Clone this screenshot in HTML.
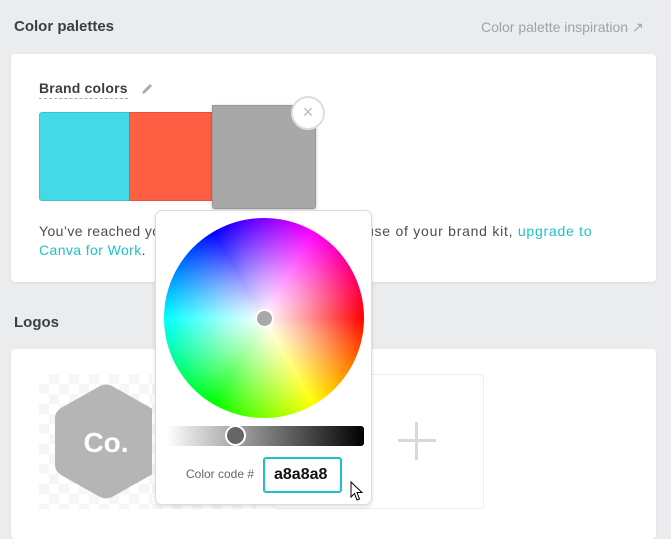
<!DOCTYPE html>
<html><head><style>
*{margin:0;padding:0;box-sizing:border-box}
body{width:671px;height:522px;overflow:hidden;background:#ebecee;font-family:"Liberation Sans",sans-serif;position:relative;color:#3b3f45}
.a{position:absolute}
h2{position:absolute;font-size:15px;font-weight:bold;color:#3b3f45}
.card{position:absolute;background:#fff;border-radius:4px;box-shadow:0 1px 2px rgba(0,0,0,.08)}
.t{font-size:14px;color:#4a4d52;white-space:nowrap;letter-spacing:.4px}
.lnk{color:#1fc0cc}
.chk{background-color:#fff;background-image:linear-gradient(45deg,#f6f6f6 25%,transparent 25%,transparent 75%,#f6f6f6 75%),linear-gradient(45deg,#f6f6f6 25%,transparent 25%,transparent 75%,#f6f6f6 75%);background-size:20px 20px;background-position:0 0,10px 10px}
</style></head><body>
<h2 style="left:14px;top:18px">Color palettes</h2>
<div class="a" style="left:481px;top:19px;font-size:14px;color:#a0a3a7">Color palette inspiration ↗</div>
<div class="card" style="left:11px;top:54px;width:645px;height:228px"></div>
<div class="a" style="left:39px;top:80px;font-size:14px;font-weight:bold;color:#3b3f45;border-bottom:1px dashed #aaa;padding-bottom:2px;letter-spacing:.2px">Brand colors</div>
<svg class="a" style="left:140px;top:82px" width="14" height="14" viewBox="0 0 14 14"><path d="M2 12 L3 9 L10 2 L12 4 L5 11 Z" fill="#aaa"/></svg>
<div class="a" style="left:39px;top:112px;width:91px;height:89px;background:#43d9e6;border-radius:3px 0 0 3px;border:1px solid #3bc3cf"></div>
<div class="a" style="left:129px;top:112px;width:85px;height:89px;background:#ff5f42;border:1px solid #e5553b"></div>
<div class="a" style="left:212px;top:105px;width:104px;height:104px;background:#a8a8a8;border:1px solid #999;border-radius:0 0 3px 3px;box-shadow:0 1px 3px rgba(0,0,0,.25)"></div>
<div class="a" style="left:291px;top:96px;width:34px;height:34px;border-radius:50%;background:#fff;border:2px solid #ddd;text-align:center;line-height:29px;font-size:18px;color:#bbb">×</div>
<div class="a t" style="left:39px;top:223px">You’ve reached yo</div>
<div class="a t" style="left:366px;top:223px;letter-spacing:.75px">use of your brand kit, <span class="lnk">upgrade to</span></div>
<div class="a t" style="left:39px;top:242px"><span class="lnk">Canva for Work</span>.</div>
<h2 style="left:14px;top:314px">Logos</h2>
<div class="card" style="left:11px;top:349px;width:645px;height:190px"></div>
<div class="a chk" style="left:39px;top:374px;width:134px;height:135px"></div>
<svg class="a" style="left:54px;top:383px" width="104" height="117" viewBox="0 0 104 117"><path d="M46 3 Q52 0 58 3 L97 25 Q103 29 103 35 L103 82 Q103 88 97 92 L58 114 Q52 117 46 114 L7 92 Q1 88 1 82 L1 35 Q1 29 7 25 Z" fill="#b6b5b5"/><text x="52" y="69" text-anchor="middle" font-family="Liberation Sans" font-weight="bold" font-size="28" fill="#fff">Co.</text></svg>
<div class="a chk" style="left:152px;top:374px;width:104px;height:135px"></div>
<div class="a" style="left:273px;top:374px;width:211px;height:135px;border:1px solid #eee;border-radius:4px;background:#fff"></div>
<div class="a" style="left:398px;top:439px;width:38px;height:3px;background:#d8d8dc"></div>
<div class="a" style="left:415px;top:422px;width:3px;height:38px;background:#d8d8dc"></div>
<div class="a" style="left:155px;top:210px;width:217px;height:295px;background:#fff;border:1px solid #ddd;border-radius:7px;box-shadow:0 2px 4px rgba(0,0,0,.12)"></div>
<div class="a" style="left:164px;top:218px;width:200px;height:200px;border-radius:50%;background:conic-gradient(from 90deg,#f00,#ff0,#0f0,#0ff,#00f,#f0f,#f00)"></div>
<div class="a" style="left:164px;top:218px;width:200px;height:200px;border-radius:50%;background:radial-gradient(circle,#fff 0%,rgba(255,255,255,.6) 30%,rgba(255,255,255,0) 70%)"></div>
<div class="a" style="left:255px;top:309px;width:19px;height:19px;border-radius:50%;background:#a8a8a8;border:2px solid #fff"></div>
<div class="a" style="left:166px;top:426px;width:198px;height:20px;border-radius:3px;background:linear-gradient(to right,#fff,#000)"></div>
<div class="a" style="left:225px;top:425px;width:21px;height:21px;border-radius:50%;background:#666;border:2px solid #fff"></div>
<div class="a" style="left:186px;top:467px;font-size:12px;color:#666">Color code #</div>
<div class="a" style="left:263px;top:457px;width:79px;height:36px;border:2px solid #1fbfc9;border-radius:3px;font-weight:bold;font-size:16px;color:#111;line-height:32px;padding-left:9px">a8a8a8</div>
<svg class="a" style="left:350px;top:481px" width="14" height="21" viewBox="0 0 14 21"><path d="M1 1 L1 16 L4.5 12.5 L7 19 L9.5 18 L7 11.5 L12 11.5 Z" fill="#fff" stroke="#000" stroke-width="1"/></svg>
</body></html>
